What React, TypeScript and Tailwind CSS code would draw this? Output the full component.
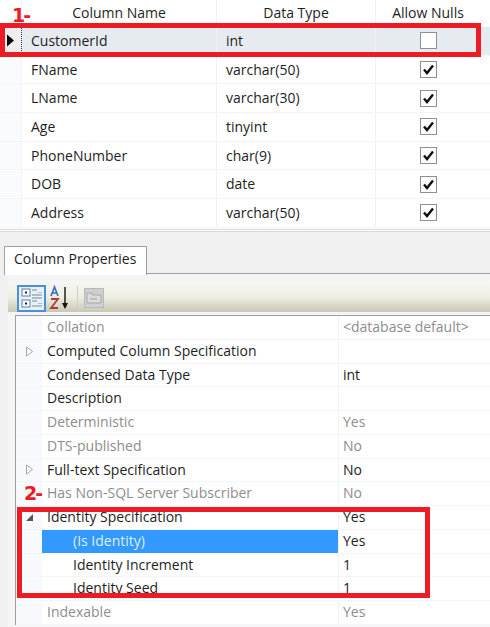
const columns = [
  { name: "CustomerId", type: "int", nulls: false },
  { name: "FName", type: "varchar(50)", nulls: true },
  { name: "LName", type: "varchar(30)", nulls: true },
  { name: "Age", type: "tinyint", nulls: true },
  { name: "PhoneNumber", type: "char(9)", nulls: true },
  { name: "DOB", type: "date", nulls: true },
  { name: "Address", type: "varchar(50)", nulls: true },
];

type Prop = {
  label: string;
  value?: string;
  muted?: boolean;
  arrow?: "closed" | "open";
  child?: boolean;
  selected?: boolean;
};

const props: Prop[] = [
  { label: "Collation", value: "<database default>", muted: true },
  { label: "Computed Column Specification", arrow: "closed" },
  { label: "Condensed Data Type", value: "int" },
  { label: "Description" },
  { label: "Deterministic", value: "Yes", muted: true },
  { label: "DTS-published", value: "No", muted: true },
  { label: "Full-text Specification", value: "No", arrow: "closed" },
  { label: "Has Non-SQL Server Subscriber", value: "No", muted: true },
  { label: "Identity Specification", value: "Yes", arrow: "open" },
  { label: "(Is Identity)", value: "Yes", child: true, selected: true },
  { label: "Identity Increment", value: "1", child: true },
  { label: "Identity Seed", value: "1", child: true },
  { label: "Indexable", value: "Yes", muted: true },
];

const Checkbox = ({ checked }: { checked: boolean }) => (
  <span className="flex h-[17px] w-[17px] items-center justify-center border border-[#8e8f8f] bg-white">
    {checked && (
      <svg width="13" height="13" viewBox="0 0 13 13">
        <path d="M2 6.5 L5 10 L11 2.5" fill="none" stroke="#111" strokeWidth="2.4" />
      </svg>
    )}
  </span>
);

const Arrow = ({ kind }: { kind: "closed" | "open" }) =>
  kind === "closed" ? (
    <svg width="9" height="11" viewBox="0 0 9 11">
      <path d="M1.5 1 L7.5 5.5 L1.5 10 Z" fill="#fff" stroke="#a6a6a6" />
    </svg>
  ) : (
    <svg width="9" height="9" viewBox="0 0 9 9">
      <path d="M8 1 V8 H1 Z" fill="#555" />
    </svg>
  );

const ToolbarIcons = () => (
  <div className="flex h-[28px] items-center pl-[9px]">
    <div className="flex h-[27px] w-[29px] items-center justify-center border-2 border-[#4a90d9] bg-[#e8f1fa]">
      <svg width="22" height="22" viewBox="0 0 22 22">
        <rect x="1" y="2" width="8" height="7" fill="#fff" stroke="#5b7fa8" />
        <rect x="4" y="4.5" width="2" height="2" fill="#222" />
        <rect x="1" y="13" width="8" height="7" fill="#fff" stroke="#5b7fa8" />
        <rect x="4" y="15.5" width="2" height="2" fill="#222" />
        <path d="M11 3 H16 M11 8 H21 M11 11 H21 M11 14 H16 M11 19 H21" stroke="#7d8791" strokeWidth="1.2" />
        <path d="M17 5.5 H21 M17 16.5 H21" stroke="#b5bcc4" strokeWidth="1.2" />
      </svg>
    </div>
    <svg width="22" height="26" viewBox="0 0 22 26" className="ml-[3px]">
      <path d="M2 11 L5.5 2 L9 11 M3.5 8 H7.5" fill="none" stroke="#3f6fc4" strokeWidth="1.7" />
      <path d="M2 14 H9 L2 23 H9" fill="none" stroke="#b03a3a" strokeWidth="1.8" />
      <path d="M16 2 V21" stroke="#111" strokeWidth="1.4" />
      <path d="M13 18 H19 L16 24 Z" fill="#111" />
    </svg>
    <div className="ml-[6px] h-[24px] w-px bg-[#cfcfc4]" />
    <div className="ml-[6px] flex h-[20px] w-[20px] items-center justify-center border border-[#b9b9b9] bg-[#cfcfcf]">
      <svg width="16" height="12" viewBox="0 0 16 12">
        <path d="M1 1 H6 V3 H15 V11 H1 Z" fill="#dcdcdc" stroke="#a8a8a8" />
        <path d="M4 7 H11" stroke="#a0a0a0" />
      </svg>
    </div>
  </div>
);

export default function App() {
  return (
    <div
      className="relative h-[627px] w-[490px] overflow-hidden bg-white text-[14px] text-[#1e1e1e]"
      style={{ fontFamily: '"Open Sans", "Noto Sans", sans-serif' }}
    >
      {/* top table designer grid */}
      <div className="h-[229px]">
        <div className="flex h-[27px] items-start">
          <div className="h-full w-[22px] border-r border-[#eef2f7]" />
          <div className="h-full w-[195px] border-r border-[#eef2f7] text-center leading-[25px]">Column Name</div>
          <div className="h-full w-[159px] border-r border-[#eef2f7] text-center leading-[25px]">Data Type</div>
          <div className="h-full w-[104px] text-center leading-[25px]">Allow Nulls</div>
        </div>
        {columns.map((col, i) => (
          <div
            key={col.name}
            className={`flex h-[28.7px] items-center border-b border-[#f2f4f8] ${i === 0 ? "bg-[#e6ebf0]" : ""}`}
          >
            <div
              className={`flex h-full w-[22px] items-center justify-center ${
                i === 0 ? "border-r border-dotted border-[#333] bg-[#eeeeee]" : "border-r border-[#eef2f7] bg-[#fafbfd]"
              }`}
            >
              {i === 0 && (
                <svg width="9" height="13" viewBox="0 0 9 13">
                  <path d="M1 0.5 L8 6.5 L1 12.5 Z" fill="#000" />
                </svg>
              )}
            </div>
            <div className="h-full w-[195px] truncate border-r border-[#eef2f7] pl-[9px] leading-[28px]">{col.name}</div>
            <div className="h-full w-[159px] border-r border-[#eef2f7] pl-[9px] leading-[28px]">{col.type}</div>
            <div className="flex h-full w-[104px] items-center justify-center">
              <Checkbox checked={col.nulls} />
            </div>
          </div>
        ))}
      </div>

      {/* splitter */}
      <div className="h-[3px] border-y border-[#d9d9d9] bg-white" />

      {/* properties pane */}
      <div className="h-[395px] bg-[#f0f0f0] pt-[13px]">
        <div className="flex h-[29px] items-end">
          <div className="z-10 -mb-px ml-[4px] flex h-[29px] w-[143px] items-start border border-b-0 border-[#a0a0a0] bg-white pl-[9px] pt-[1px]">
            Column Properties
          </div>
          <div className="h-px flex-1 bg-[#a0a0a0]" />
        </div>
        <div className="ml-[8px] h-full bg-[#f5f5f5] pt-[8px]">
          <div className="h-[30px] bg-gradient-to-b from-[#f7f7f2] via-[#eeeee2] to-[#c9c8b4] pt-[2px]">
            <ToolbarIcons />
          </div>
          <div className="ml-[7px] mt-[3px] border-l border-t border-[#a0a0a0] bg-white">
            {props.map((p) => (
              <div key={p.label} className="flex h-[23.76px] items-center border-b border-[#f2f5fa]">
                <div className="flex h-full w-[26px] items-center justify-center bg-[#f7f9fc]">
                  {p.arrow && <Arrow kind={p.arrow} />}
                </div>
                <div
                  className={`h-full w-[296px] truncate leading-[22px] ${p.child ? "pl-[31px]" : "pl-[5px]"} ${
                    p.selected ? "bg-[#3399ff] text-[#ddeeff]" : p.muted ? "text-[#8d8d8d]" : ""
                  }`}
                >
                  {p.label}
                </div>
                <div
                  className={`h-full flex-1 border-l border-[#eef2f8] pl-[4px] leading-[22px] ${
                    p.muted ? "text-[#8d8d8d]" : ""
                  }`}
                >
                  {p.value}
                </div>
              </div>
            ))}
          </div>
        </div>
      </div>

      {/* red annotations */}
      <div className="absolute left-0 top-[23px] h-[34px] w-[481px] border-[5px] border-[#ed1c24]" />
      <div className="absolute left-[17px] top-[507px] h-[91px] w-[413px] border-[5px] border-[#ed1c24]" />
      <span
        className="absolute left-[12px] top-[3px] text-[19px] font-bold leading-[24px] tracking-[-2px] text-[#ed1c24]"
        style={{ fontFamily: '"DejaVu Sans", sans-serif' }}
      >
        1-
      </span>
      <span
        className="absolute left-[24px] top-[481px] text-[19px] font-bold leading-[24px] tracking-[-2px] text-[#ed1c24]"
        style={{ fontFamily: '"DejaVu Sans", sans-serif' }}
      >
        2-
      </span>
    </div>
  );
}
